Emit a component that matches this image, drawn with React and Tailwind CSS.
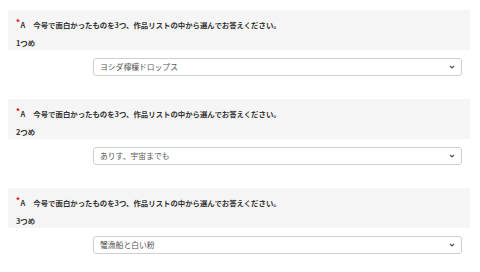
import React from "react";

const items = [
  { n: "1つめ", v: "ヨシダ檸檬ドロップス" },
  { n: "2つめ", v: "ありす、宇宙までも" },
  { n: "3つめ", v: "蟹漁船と白い粉" },
];

function Chevron() {
  return (
    <svg width="6" height="4" viewBox="0 0 6 4" className="shrink-0">
      <path d="M1 1 L3 3 L5 1" fill="none" stroke="#555" strokeWidth="1.2" />
    </svg>
  );
}

export default function App() {
  return (
    <div
      className="w-[480px] h-[272px] bg-white overflow-hidden pt-[10px] pl-[8px] pr-[10px] flex flex-col"
      style={{ fontFamily: '"Noto Sans CJK JP", "Noto Sans", sans-serif' }}
    >
      {items.map((it, i) => (
        <div key={i} className={i > 0 ? "mt-[23px]" : ""}>
          <div className="bg-[#f5f5f5] h-[40px] pl-[8px] flex flex-col text-[#333]">
            <div className="flex items-center h-[24px] pt-[1px] mt-[2px] font-bold text-[7.4px] leading-none">
              <span className="text-[#e60000] text-[8px] self-start mt-[5px] mr-[0.5px]">*</span>
              <span className="mr-[8px]">A</span>
              <span>今号で面白かったものを3つ、作品リストの中から選んでお答えください。</span>
            </div>
            <div className="flex items-center h-[12px] mt-[1px] font-bold text-[7.4px] leading-none">
              {it.n}
            </div>
          </div>
          <div className="flex justify-end pr-[8px] mt-[8px]">
            <div className="w-[369px] h-[18px] border border-[#cfcfcf] rounded-[3px] bg-white flex items-center justify-between pl-[6px] pr-[6px]">
              <span className="text-[7.8px] text-[#555] leading-none">{it.v}</span>
              <Chevron />
            </div>
          </div>
        </div>
      ))}
    </div>
  );
}
